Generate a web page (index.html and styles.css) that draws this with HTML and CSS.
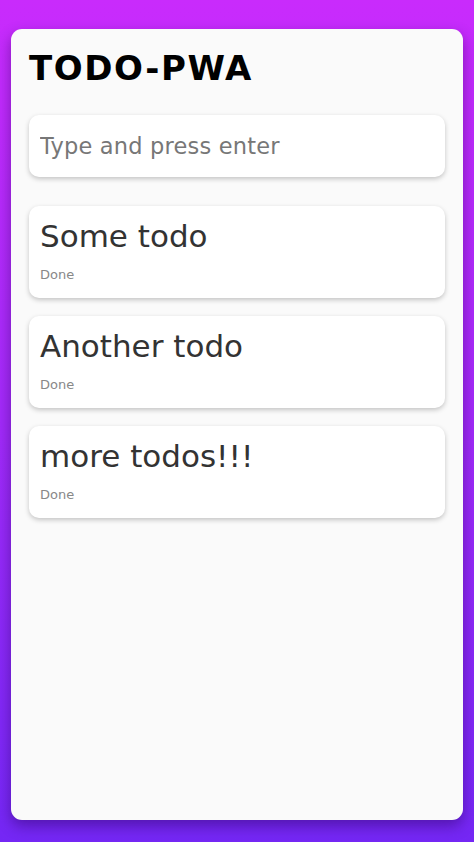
FILE: index.html
```html
<!DOCTYPE html>
<html lang="en">
<head>
<meta charset="utf-8">
<title>TODO-PWA</title>
<link rel="stylesheet" href="styles.css">
</head>
<body>
<main class="app">
  <h1 class="title">TODO-PWA</h1>
  <input class="new-todo" type="text" placeholder="Type and press enter">
  <ul class="todos">
    <li class="todo">
      <div class="todo-text">Some todo</div>
      <div class="todo-status">Done</div>
    </li>
    <li class="todo">
      <div class="todo-text">Another todo</div>
      <div class="todo-status">Done</div>
    </li>
    <li class="todo">
      <div class="todo-text">more todos!!!</div>
      <div class="todo-status">Done</div>
    </li>
  </ul>
</main>
</body>
</html>
```

FILE: styles.css
```css
* { box-sizing: border-box; }
html, body { height: 100%; }
body {
  margin: 0;
  padding: 29px 11px 22px;
  background: linear-gradient(180deg, #c92bfc 0%, #a22af8 50%, #7427f4 100%);
  font-family: "DejaVu Sans", "Open Sans", sans-serif;
}
.app {
  height: 100%;
  background: #fafafa;
  border-radius: 11px;
  box-shadow: 0 6px 14px rgba(40, 0, 90, 0.45);
  padding: 17px 18px;
  display: flex;
  flex-direction: column;
}
.title {
  margin: 0;
  font-size: 34px;
  line-height: 44px;
  font-weight: 700;
  color: #000;
  letter-spacing: 1.6px;
}
.new-todo {
  margin-top: 25px;
  height: 62px;
  width: 100%;
  flex: none;
  border: none;
  border-radius: 10px;
  background: #fff;
  box-shadow: 0 2px 5px rgba(0, 0, 0, 0.22);
  padding: 0 11px;
  font-family: inherit;
  font-size: 22.5px;
  letter-spacing: 0.2px;
  color: #333;
  outline: none;
}
.new-todo::placeholder { color: #777; }
.todos {
  list-style: none;
  margin: 29px 0 0;
  padding: 0;
  display: flex;
  flex-direction: column;
  gap: 18px;
}
.todo {
  height: 92px;
  background: #fff;
  border-radius: 10px;
  box-shadow: 0 2px 5px rgba(0, 0, 0, 0.22);
  padding: 10px 11px;
}
.todo-text {
  font-size: 31px;
  line-height: 40px;
  color: #333;
}
.todo-status {
  margin-top: 10px;
  font-size: 13px;
  line-height: 18px;
  color: #888;
}
```
